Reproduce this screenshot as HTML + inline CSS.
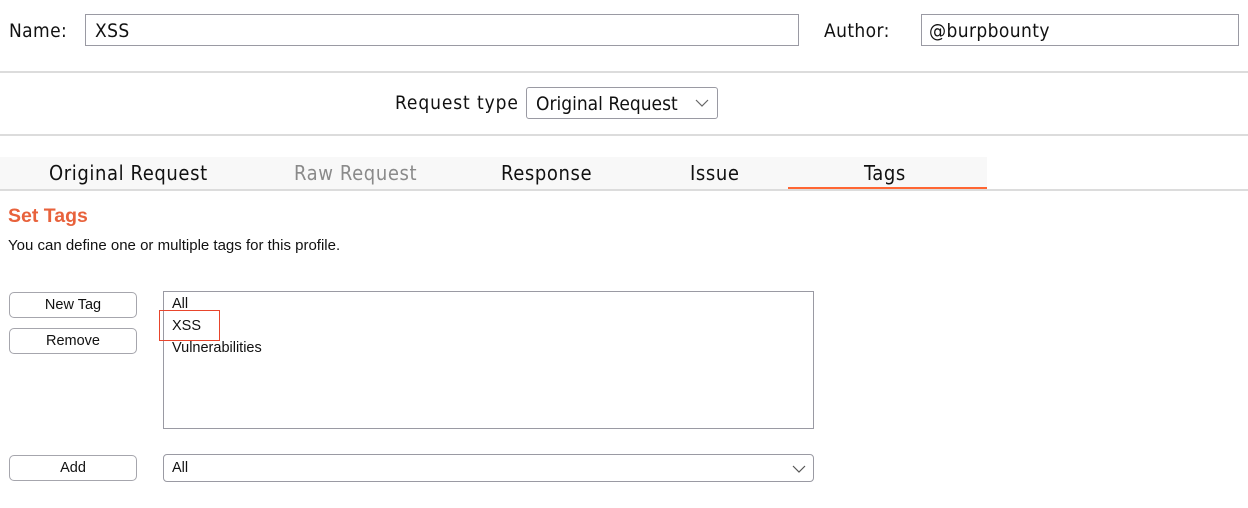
<!DOCTYPE html>
<html><head><meta charset="utf-8"><style>
body{margin:0;width:1248px;height:508px;background:#fff;position:relative;overflow:hidden;font-family:"Liberation Sans",sans-serif;color:#111}
.a{position:absolute}
.big{font-size:19px;letter-spacing:0.4px;font-family:"DejaVu Sans Condensed","DejaVu Sans","Liberation Sans",sans-serif}
.inp{position:absolute;border:1px solid #9a9aa3;background:#fff;box-sizing:border-box}
.hr{position:absolute;left:0;width:1248px;height:2px;background:#dcdcdc}
.btn{position:absolute;left:9px;width:128px;height:26px;border:1px solid #a6a6ad;border-radius:5px;box-sizing:border-box;font-size:14.5px;text-align:center;line-height:24px;background:#fff}
.tab{position:absolute;top:161px;font-size:20px;letter-spacing:0.6px;font-family:"DejaVu Sans Condensed","DejaVu Sans",sans-serif}
.sm{font-size:14.5px}
</style></head><body>
<div class="a big" style="left:9px;top:20px">Name:</div>
<div class="inp" style="left:85px;top:14px;width:714px;height:32px"><span class="a big" style="left:9px;top:5px">XSS</span></div>
<div class="a big" style="left:824px;top:20px">Author:</div>
<div class="inp" style="left:921px;top:14px;width:318px;height:32px"><span class="a big" style="left:7px;top:5px">@burpbounty</span></div>
<div class="hr" style="top:71px"></div>
<div class="a big" style="left:395px;top:92px;letter-spacing:0.9px">Request type</div>
<div class="inp" style="left:526px;top:87px;width:192px;height:32px;border-radius:3px"><span class="a big" style="left:9px;top:5px;letter-spacing:0">Original Request</span>
<svg class="a" style="left:168px;top:10px" width="14" height="10"><path d="M1 2 L7 8 L13 2" stroke="#666" fill="none" stroke-width="1.2"/></svg></div>
<div class="hr" style="top:134px"></div>
<div class="a" style="left:0;top:157px;width:987px;height:33px;background:#f8f8f8"></div>
<div class="a" style="left:788px;top:187px;width:199px;height:3px;background:#ff6633"></div>
<div class="hr" style="top:189px"></div>
<div class="tab" style="left:49px">Original Request</div>
<div class="tab" style="left:294px;color:#8a8a8a">Raw Request</div>
<div class="tab" style="left:501px">Response</div>
<div class="tab" style="left:690px">Issue</div>
<div class="tab" style="left:864px">Tags</div>
<div class="a" style="left:8px;top:205px;font-size:19.5px;font-weight:bold;color:#e8623c">Set Tags</div>
<div class="a" style="left:8px;top:237px;font-size:15px">You can define one or multiple tags for this profile.</div>
<div class="btn" style="top:292px">New Tag</div>
<div class="btn" style="top:328px">Remove</div>
<div class="btn" style="top:455px">Add</div>
<div class="inp" style="left:163px;top:291px;width:651px;height:138px">
<div class="a sm" style="left:8px;top:4px">All</div>
<div class="a sm" style="left:8px;top:26px">XSS</div>
<div class="a sm" style="left:8px;top:48px">Vulnerabilities</div>
</div>
<div class="a" style="left:159px;top:310px;width:59px;height:29px;border:1.5px solid #e8452c"></div>
<div class="inp" style="left:163px;top:454px;width:651px;height:28px;border-radius:4px"><span class="a sm" style="left:8px;top:5px">All</span>
<svg class="a" style="left:628px;top:9px" width="14" height="10"><path d="M1 2 L7 8 L13 2" stroke="#555" fill="none" stroke-width="1.2"/></svg></div>
</body></html>
